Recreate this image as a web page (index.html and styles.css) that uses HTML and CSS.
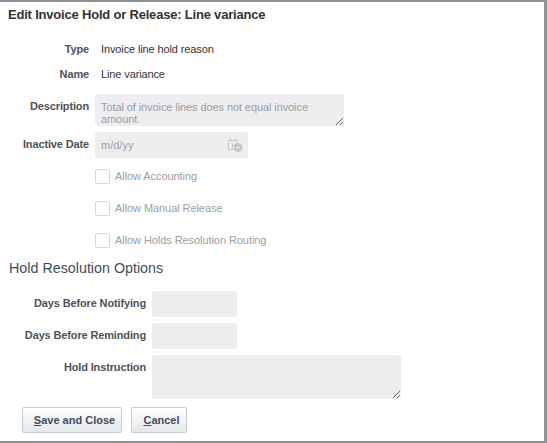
FILE: index.html
```html
<!DOCTYPE html>
<html>
<head>
    <title>Edit Invoice Hold or Release</title>
    <link rel="stylesheet" href="styles.css">
</head>

<body>
    <div class="dialog">
        <h1 class="dialog-title">Edit Invoice Hold or Release: Line variance</h1>

        <div class="form form-main">
            <div class="row row-type">
                <span class="label">Type</span>
                <span class="value">Invoice line hold reason</span>
            </div>
            <div class="row row-name">
                <span class="label">Name</span>
                <span class="value">Line variance</span>
            </div>
            <div class="row row-description">
                <span class="label label-top">Description</span>
                <textarea class="field area-description" disabled>Total of invoice lines does not equal invoice amount.</textarea>
            </div>
            <div class="row row-date">
                <span class="label label-up">Inactive Date</span>
                <div class="field date-field">
                    <span class="placeholder">m/d/yy</span>
                    <svg class="date-icon" width="16" height="16" viewBox="0 0 16 16">
                        <path d="M1.5 3.5h9v9h-9z" fill="none" stroke="#c4c6c9"/>
                        <path d="M3.5 1v3M8.5 1v3" stroke="#c4c6c9"/>
                        <path d="M4.5 6.5h1v4" fill="none" stroke="#c4c6c9"/>
                        <circle cx="11" cy="10.5" r="4.5" fill="#c4c6c9"/>
                        <path d="M9 10.5h4" stroke="#eeeef0" stroke-width="1.2"/>
                    </svg>
                </div>
            </div>
            <div class="check-row"><span class="checkbox"></span><span class="check-label">Allow Accounting</span></div>
            <div class="check-row"><span class="checkbox"></span><span class="check-label">Allow Manual Release</span></div>
            <div class="check-row"><span class="checkbox"></span><span class="check-label">Allow Holds Resolution Routing</span></div>
        </div>

        <h2 class="section-title">Hold Resolution Options</h2>

        <div class="form form-options">
            <div class="row">
                <span class="label label-up">Days Before Notifying</span>
                <div class="field days-field"></div>
            </div>
            <div class="row">
                <span class="label label-up">Days Before Reminding</span>
                <div class="field days-field"></div>
            </div>
            <div class="row row-top">
                <span class="label label-top">Hold Instruction</span>
                <textarea class="field area-instruction"></textarea>
            </div>
        </div>

        <div class="buttons">
            <button class="btn btn-save"><u>S</u>ave and Close</button>
            <button class="btn btn-cancel"><u>C</u>ancel</button>
        </div>
    </div>
</body>
</html>
```

FILE: styles.css
```css
html, body {
    margin: 0;
    height: 100%;
    overflow: hidden;
}

body {
    background: #fff;
    font-family: "Liberation Sans", Arial, sans-serif;
    color: #333;
}

.dialog {
    box-sizing: border-box;
    width: 547px;
    height: 443px;
    background: #fff;
    border-top: 2px solid #8f9396;
    border-right: 3px solid #8f9396;
    border-bottom: 2px solid #8f9396;
    overflow: hidden;
}

.dialog-title {
    margin: 5px 0 0 8px;
    font-size: 13px;
    font-weight: bold;
    line-height: 15px;
    letter-spacing: -0.2px;
    color: #333;
}

.form {
    display: flex;
    flex-direction: column;
}

.form-main {
    margin-top: 20px;
    --label-width: 89px;
}

.form-options {
    margin-top: 14px;
    gap: 6px;
    --label-width: 146px;
}

.row {
    display: flex;
    align-items: center;
}

.row-type {
    height: 14px;
}

.row-name {
    height: 14px;
    margin-top: 11px;
}

.row-description {
    margin-top: 13px;
    align-items: flex-start;
}

.row-date {
    margin-top: 6px;
}

.row-top {
    align-items: flex-start;
}

.label {
    width: var(--label-width);
    flex: none;
    text-align: right;
    font-size: 11px;
    font-weight: bold;
    letter-spacing: -0.14px;
    color: #4f5356;
}

.label-top {
    margin-top: 6px;
}

.label-up {
    margin-top: -2px;
}

.value {
    margin-left: 12px;
    font-size: 11px;
    letter-spacing: -0.12px;
    color: #333;
}

.field {
    box-sizing: border-box;
    margin: 0 0 0 6px;
    border: none;
    border-radius: 2px;
    background: #eeeef0;
    display: block;
    outline: none;
    font-family: inherit;
}

textarea.field {
    padding: 7px 6px 0;
    font-size: 11px;
    line-height: 12px;
    letter-spacing: -0.09px;
    color: #9a9da0;
    overflow: hidden;
}

.area-description {
    width: 249px;
    height: 32px;
}

.area-instruction {
    width: 249px;
    height: 44px;
}

.date-field {
    width: 153px;
    height: 26px;
    display: flex;
    align-items: center;
    justify-content: space-between;
    padding: 0 5px 0 6px;
}

.placeholder {
    font-size: 11px;
    color: #9a9da0;
}

.date-icon {
    display: block;
}

.days-field {
    width: 85px;
    height: 26px;
}

.check-row {
    display: flex;
    align-items: center;
    height: 15px;
    margin: 11px 0 0 95px;
}

.check-row + .check-row {
    margin-top: 17px;
}

.checkbox {
    box-sizing: border-box;
    width: 15px;
    height: 15px;
    border: 1px solid #d4d6d8;
    border-radius: 2px;
    background: #fff;
}

.check-label {
    margin: -2px 0 0 5px;
    font-size: 11px;
    letter-spacing: -0.07px;
    color: #9a9da0;
}

.section-title {
    margin: 12px 0 0 9px;
    font-size: 14.3px;
    font-weight: normal;
    line-height: 17px;
    color: #3f4d5a;
}

.buttons {
    display: flex;
    gap: 9px;
    margin: 8px 0 0 22px;
}

.btn {
    box-sizing: border-box;
    height: 26px;
    padding: 0 0 0 5px;
    border: 1px solid #c4ced7;
    border-radius: 2px;
    background: linear-gradient(#ffffff, #e4e8ea);
    font-family: inherit;
    font-size: 11px;
    font-weight: bold;
    color: #3f4d5a;
}

.btn-save {
    width: 100px;
}

.btn-cancel {
    width: 56px;
}
```
